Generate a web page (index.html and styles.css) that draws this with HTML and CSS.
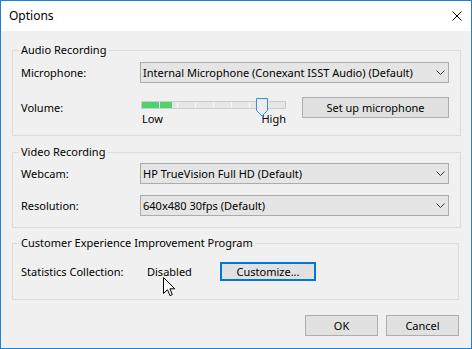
FILE: index.html
```html
<!DOCTYPE html>
<html lang="en">
<head>
<meta charset="utf-8">
<title>Options</title>
<link rel="stylesheet" href="styles.css">
</head>
<body>
<div class="window">
  <div class="titlebar">
    <span class="title">Options</span>
    <svg class="close" width="10" height="10" viewBox="0 0 10 10"><path d="M0.5 0.5 L9.5 9.5 M9.5 0.5 L0.5 9.5" stroke="#000" stroke-width="1" fill="none"/></svg>
  </div>
  <div class="body">
    <fieldset class="group group-audio">
      <legend>Audio Recording</legend>
      <div class="field">
        <span class="label">Microphone:</span>
        <div class="select"><span>Internal Microphone (Conexant ISST Audio) (Default)</span><svg class="chev" width="9" height="5" viewBox="0 0 9 5"><path d="M0.5 0.5 L4.5 4.5 L8.5 0.5" stroke="#3a3a3a" fill="none"/></svg></div>
      </div>
      <div class="field field-volume">
        <span class="label">Volume:</span>
        <div class="volume">
          <div class="slider">
            <div class="track"></div>
            <svg class="thumb" width="12" height="19" viewBox="0 0 12 19"><path d="M0.5 0.5 H11.5 V12.5 L6 18 L0.5 12.5 Z" fill="#ececec" stroke="#2f8ff0"/></svg>
          </div>
          <div class="slider-labels"><span>Low</span><span>High</span></div>
        </div>
        <button class="btn btn-setup">Set up microphone</button>
      </div>
    </fieldset>

    <fieldset class="group group-video">
      <legend>Video Recording</legend>
      <div class="field">
        <span class="label">Webcam:</span>
        <div class="select"><span>HP TrueVision Full HD (Default)</span><svg class="chev" width="9" height="5" viewBox="0 0 9 5"><path d="M0.5 0.5 L4.5 4.5 L8.5 0.5" stroke="#3a3a3a" fill="none"/></svg></div>
      </div>
      <div class="field field-res">
        <span class="label">Resolution:</span>
        <div class="select"><span>640x480 30fps (Default)</span><svg class="chev" width="9" height="5" viewBox="0 0 9 5"><path d="M0.5 0.5 L4.5 4.5 L8.5 0.5" stroke="#3a3a3a" fill="none"/></svg></div>
      </div>
    </fieldset>

    <fieldset class="group group-ceip">
      <legend>Customer Experience Improvement Program</legend>
      <div class="stats-row">
        <span class="label">Statistics Collection:</span>
        <span class="status">Disabled</span>
        <button class="btn btn-focus">Customize...</button>
      </div>
    </fieldset>

    <div class="footer">
      <button class="btn btn-dlg">OK</button>
      <button class="btn btn-dlg">Cancel</button>
    </div>
  </div>
  <svg class="cursor" width="13" height="20" viewBox="0 0 13 20"><path d="M0.5 0.5 V16.5 L4.5 12.7 L7 18.6 L9.3 17.6 L6.9 11.8 H11.8 Z" fill="#fff" stroke="#000" stroke-width="1" stroke-linejoin="miter"/></svg>
</div>
</body>
</html>
```
FILE: styles.css
```css
* { box-sizing: border-box; }
html, body { margin: 0; padding: 0; }
body {
  font-family: "Noto Sans", "Open Sans", sans-serif;
  font-size: 11px;
  line-height: 15px;
  color: #000;
  background: #fff;
}
.window {
  position: relative;
  width: 472px;
  height: 349px;
  border: 1px solid #1883d7;
  background: #f0f0f0;
  display: flex;
  flex-direction: column;
}
.titlebar {
  height: 30px;
  background: #fff;
  display: flex;
  align-items: center;
  justify-content: space-between;
  padding: 0 9px 0 8px;
}
.title { font-size: 12px; line-height: 16px; }
.close { display: block; }
.body {
  flex: 1;
  display: flex;
  flex-direction: column;
  padding: 11px 10px 0 11px;
}
.group {
  margin: 0;
  min-width: 0;
  border: 1px solid #dcdcdc;
  padding: 4px 11px 9px 8px;
}
.group legend {
  padding: 0 2px;
  margin-left: -2px;
  line-height: 16px;
}
.group-video { margin-top: 8px; padding-top: 3px; padding-bottom: 11px; }
.group-ceip { margin-top: 7px; margin-right: 2px; padding-top: 10px; padding-bottom: 17px; }
.field {
  display: grid;
  grid-template-columns: 119px 1fr;
  align-items: start;
}
.label { line-height: 21px; white-space: nowrap; }
.field-volume {
  margin-top: 14px;
  grid-template-columns: 119px 162px 147px;
}
.field-res { margin-top: 11px; }
.select {
  height: 21px;
  border: 1px solid #acacac;
  background: #e5e5e5;
  display: flex;
  align-items: center;
  justify-content: space-between;
  padding: 0 3px 0 2px;
  white-space: nowrap;
}
.chev { display: block; }
.volume { margin-left: 1px; width: 145px; }
.slider { position: relative; height: 15px; padding-top: 4px; }
.track {
  height: 8px;
  border: 1px solid #cdcdcd;
  background:
    repeating-linear-gradient(90deg, transparent 0 17px, #f7f7f7 17px 18px),
    linear-gradient(90deg, #4fd16c 0 30px, transparent 30px),
    #e6e6e6;
}
.thumb { position: absolute; left: 115px; top: 1px; display: block; }
.slider-labels {
  display: flex;
  justify-content: space-between;
  padding-left: 1px;
  line-height: 14px;
}
.btn {
  font: inherit;
  color: #000;
  margin: 0;
  padding: 0;
  height: 21px;
  border: 1px solid #adadad;
  background: #e1e1e1;
  line-height: 19px;
  text-align: center;
}
.btn-focus {
  height: 19px;
  border: 2px solid #0078d7;
  line-height: 15px;
}
.stats-row {
  display: grid;
  grid-template-columns: 126px 73px 96px;
  align-items: center;
  height: 21px;
}
.status { line-height: 21px; }
.footer {
  display: flex;
  justify-content: flex-end;
  gap: 8px;
  margin-top: 15px;
  margin-right: 2px;
}
.btn-dlg { width: 73px; }
.cursor { position: absolute; left: 162px; top: 276px; display: block; }
```
